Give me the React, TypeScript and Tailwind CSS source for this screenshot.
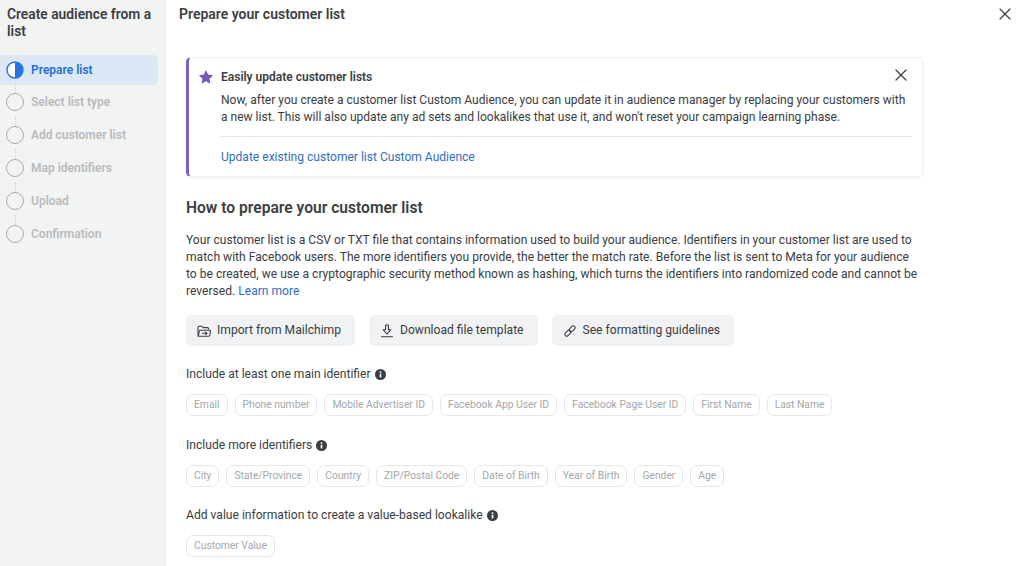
import { X } from "lucide-react";

const steps = ["Select list type", "Add customer list", "Map identifiers", "Upload", "Confirmation"];
const mainIds = ["Email", "Phone number", "Mobile Advertiser ID", "Facebook App User ID", "Facebook Page User ID", "First Name", "Last Name"];
const moreIds = ["City", "State/Province", "Country", "ZIP/Postal Code", "Date of Birth", "Year of Birth", "Gender", "Age"];

const InfoDot = () => (
  <svg width="11" height="11" viewBox="0 0 12 12" className="shrink-0">
    <circle cx="6" cy="6" r="6" fill="#3a3d42" />
    <rect x="5.1" y="5.2" width="1.8" height="4" fill="#fff" />
    <circle cx="6" cy="3.4" r="1.05" fill="#fff" />
  </svg>
);

const FolderIcon = () => (
  <svg width="14" height="14" viewBox="0 0 14 14" fill="none" stroke="#3a3d42" strokeWidth="1.1">
    <path d="M1 11.5V3.2c0-.6.4-1 1-1h3l1.2 1.4h4.4c.6 0 1 .4 1 1v1" />
    <path d="M1.2 12.2h10.6c.6 0 1-.4 1.1-1l.6-4c.1-.6-.3-1-.9-1H3.4c-.5 0-.9.3-1 .8L1.2 12.2z" />
    <path d="M5 9.3h5M8.3 7.8l1.7 1.5-1.7 1.5" />
  </svg>
);

const DownloadIcon = () => (
  <svg width="14" height="14" viewBox="0 0 14 14" fill="none" stroke="#3a3d42" strokeWidth="1.1">
    <path d="M5.6 1h2.8v4.8h2.4L7 10 3.2 5.8h2.4z" strokeLinejoin="round" />
    <path d="M1.5 12.8h11" strokeLinecap="round" />
  </svg>
);

const LinkIcon = () => (
  <svg width="14" height="14" viewBox="0 0 14 14" fill="none" stroke="#3a3d42" strokeWidth="1.1">
    <rect x="-1.9" y="-3.1" width="3.8" height="6.8" rx="1.9" transform="translate(9.4 4.6) rotate(45)" />
    <rect x="-1.9" y="-3.7" width="3.8" height="6.8" rx="1.9" transform="translate(4.6 9.4) rotate(45)" />
  </svg>
);

const Chip = ({ label }: { label: string }) => (
  <span className="h-[22px] flex items-center px-[7px] rounded-[7px] border border-[#e4e6e8] text-[10.3px] text-[#a3a6aa] whitespace-nowrap">
    {label}
  </span>
);

const ActionButton = ({ icon, label }: { icon: React.ReactNode; label: string }) => (
  <button className="h-[31px] flex items-center gap-[6px] pl-[11px] pr-[14px] rounded-[5px] bg-[#f1f2f3] text-[12.1px] text-[#3a3d42] whitespace-nowrap">
    {icon}
    {label}
  </button>
);

export default function App() {
  return (
    <div className="w-[1024px] h-[566px] overflow-hidden flex bg-white font-['Roboto',sans-serif]">
      {/* Sidebar */}
      <aside className="w-[166px] shrink-0 bg-[#f2f3f3] border-r border-[#e9eaeb] pr-[7px]">
        <h1 className="pl-[7px] pt-[6px] text-[13.8px] leading-[17px] font-semibold text-[#3b3e43]">
          Create audience from a list
        </h1>
        <div className="mt-[15px] flex flex-col">
          <div className="h-[30px] flex items-center gap-[7px] pl-[6px] rounded-r-[5px] bg-[#dce8f6]">
            <svg width="18" height="18" viewBox="0 0 18 18">
              <circle cx="9" cy="9" r="8" fill="#fff" stroke="#2374e1" strokeWidth="1.4" />
              <path d="M9 1a8 8 0 0 1 0 16z" fill="#2374e1" />
            </svg>
            <span className="text-[12px] font-semibold text-[#2270d4]">Prepare list</span>
          </div>
          {steps.map((s) => (
            <div key={s} className="relative h-[33px] flex items-center gap-[7px] pl-[6px]">
              {/* dotted connector running up to the previous step */}
              <span className="absolute left-[14.5px] -top-[2px] h-[10px] border-l border-dotted border-[#cfd1d4]" />
              <span className="w-[18px] h-[18px] rounded-full border-[1.5px] border-[#a9abae]" />
              <span className="text-[12px] font-semibold text-[#b8babd]">{s}</span>
            </div>
          ))}
        </div>
      </aside>

      {/* Main */}
      <main className="flex-1 min-w-0 relative pl-[13px]">
        <h2 className="pt-[6px] text-[14px] leading-[17px] font-semibold text-[#3b3e43]">Prepare your customer list</h2>
        <button className="absolute top-[4px] right-[9px] text-[#3a3d42]">
          <X size={20} strokeWidth={1.4} />
        </button>

        <div className="ml-[7px] mt-[34px] w-[737px] h-[120px] rounded-[5px] border border-[#f0f1f2] border-l-[3px] border-l-[#7c62b8] shadow-[0_1px_3px_rgba(0,0,0,0.06)] pl-[10px] pr-[10px] pt-[10px] relative">
          <div className="flex items-center gap-[7px]">
            <svg width="16" height="16" viewBox="0 0 24 24" fill="#7358b4" className="-ml-[1px]">
              <path d="M12 1.5l3.2 6.9 7.5.9-5.5 5.2 1.4 7.5L12 18.3l-6.6 3.7 1.4-7.5L1.3 9.3l7.5-.9z" />
            </svg>
            <span className="text-[12px] font-semibold text-[#3b3e43]">Easily update customer lists</span>
          </div>
          <button className="absolute top-[7px] right-[11px] text-[#3a3d42]">
            <X size={20} strokeWidth={1.5} />
          </button>
          <div className="ml-[22px]">
            <p className="mt-[6px] text-[12.05px] leading-[17px] text-[#3a3d42]">
              Now, after you create a customer list Custom Audience, you can update it in audience manager by replacing your customers with a new list. This will also update any ad sets and lookalikes that use it, and won't reset your campaign learning phase.
            </p>
            <div className="mt-[10px] border-t border-[#e3e4e6]" />
            <a className="block mt-[12px] text-[12.05px] leading-[17px] text-[#2f6fc0]">Update existing customer list Custom Audience</a>
          </div>
        </div>

        <div className="ml-[7px] w-[737px]">
          <h3 className="mt-[21px] text-[15.6px] leading-[20px] font-semibold text-[#3b3e43]">How to prepare your customer list</h3>
          <p className="mt-[14px] w-[733px] text-[12.08px] leading-[17px] text-[#3a3d42]">
            Your customer list is a CSV or TXT file that contains information used to build your audience. Identifiers in your customer list are used to match with Facebook users. The more identifiers you provide, the better the match rate. Before the list is sent to Meta for your audience to be created, we use a cryptographic security method known as hashing, which turns the identifiers into randomized code and cannot be reversed. <a className="text-[#2f6fc0]">Learn more</a>
          </p>

          <div className="mt-[15px] flex gap-[14px]">
            <ActionButton icon={<FolderIcon />} label="Import from Mailchimp" />
            <ActionButton icon={<DownloadIcon />} label="Download file template" />
            <ActionButton icon={<LinkIcon />} label="See formatting guidelines" />
          </div>

          <div className="mt-[20px] flex items-center gap-[4px] text-[12.1px] leading-[17px] text-[#3a3d42]">
            Include at least one main identifier <InfoDot />
          </div>
          <div className="mt-[11px] flex gap-[7px]">
            {mainIds.map((c) => <Chip key={c} label={c} />)}
          </div>

          <div className="mt-[21px] flex items-center gap-[4px] text-[12.1px] leading-[17px] text-[#3a3d42]">
            Include more identifiers <InfoDot />
          </div>
          <div className="mt-[11px] flex gap-[7px]">
            {moreIds.map((c) => <Chip key={c} label={c} />)}
          </div>

          <div className="mt-[20px] flex items-center gap-[4px] text-[12.1px] leading-[17px] text-[#3a3d42]">
            Add value information to create a value-based lookalike <InfoDot />
          </div>
          <div className="mt-[11px] flex gap-[7px]">
            <Chip label="Customer Value" />
          </div>
        </div>
      </main>
    </div>
  );
}
